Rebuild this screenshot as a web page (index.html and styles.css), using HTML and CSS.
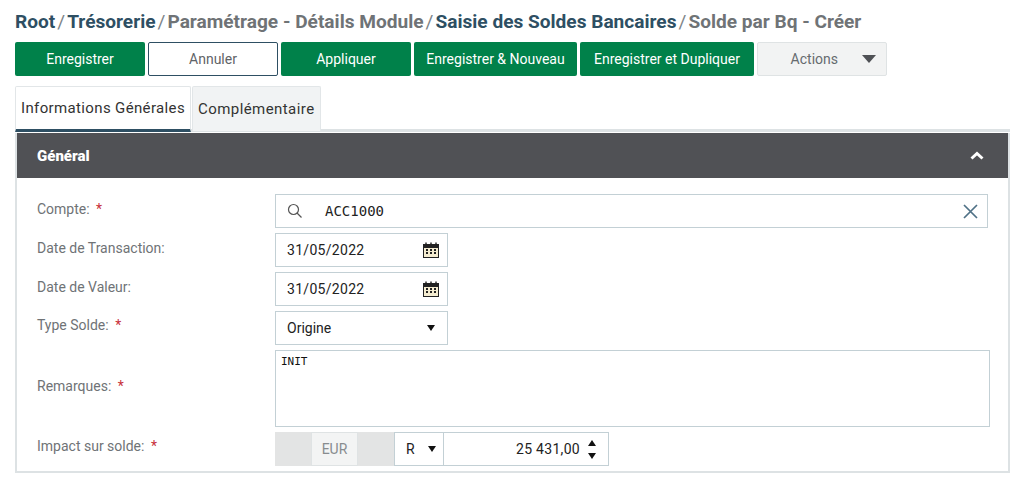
FILE: index.html
```html
<!DOCTYPE html>
<html lang="fr">
<head>
  <meta charset="UTF-8" />
  <title>Solde par Bq - Créer</title>
  <link rel="stylesheet" href="styles.css">
</head>
<body>
  <div class="breadcrumb">
    <a class="crumb-link">Root</a><span class="sep">/</span><a class="crumb-link">Trésorerie</a><span class="sep">/</span><span class="crumb">Paramétrage - Détails Module</span><span class="sep">/</span><a class="crumb-link">Saisie des Soldes Bancaires</a><span class="sep">/</span><span class="crumb">Solde par Bq - Créer</span>
  </div>

  <div class="toolbar">
    <button class="btn btn-green">Enregistrer</button>
    <button class="btn btn-outline">Annuler</button>
    <button class="btn btn-green">Appliquer</button>
    <button class="btn btn-green btn-new">Enregistrer &amp; Nouveau</button>
    <button class="btn btn-green btn-dup">Enregistrer et Dupliquer</button>
    <button class="btn btn-actions">Actions<span class="actions-caret"></span></button>
  </div>

  <div class="tabs">
    <div class="tab active">Informations Générales</div>
    <div class="tab">Complémentaire</div>
  </div>

  <div class="panel">
    <div class="panel-head">
      <span>Général</span>
      <svg width="14" height="9" viewBox="0 0 14 9"><path d="M1.5 7.5 L7 2.5 L12.5 7.5" fill="none" stroke="#fff" stroke-width="3"/></svg>
    </div>
    <div class="form">
      <div class="row">
        <label class="lbl">Compte: <span class="req">*</span></label>
        <div class="field field-search">
          <svg class="search-icon" width="16" height="16" viewBox="0 0 16 16"><circle cx="6.5" cy="6.5" r="5" fill="none" stroke="#555" stroke-width="1.2"/><path d="M10 10 L14.5 14.5" stroke="#555" stroke-width="1.2"/></svg>
          <span class="search-value">ACC1000</span>
          <svg class="clear-icon" width="15" height="15" viewBox="0 0 15 15"><path d="M1 1 L14 14 M14 1 L1 14" stroke="#4f7186" stroke-width="1.7"/></svg>
        </div>
      </div>
      <div class="row">
        <label class="lbl">Date de Transaction:</label>
        <div class="field field-short">
          <span class="date-value">31/05/2022</span>
          <svg width="16" height="16" viewBox="0 0 16 16"><use href="#cal"/></svg>
        </div>
      </div>
      <div class="row">
        <label class="lbl">Date de Valeur:</label>
        <div class="field field-short">
          <span class="date-value">31/05/2022</span>
          <svg width="16" height="16" viewBox="0 0 16 16"><use href="#cal"/></svg>
        </div>
      </div>
      <div class="row">
        <label class="lbl lbl-up">Type Solde: <span class="req">*</span></label>
        <div class="field field-short">
          <span>Origine</span>
          <span class="mini-caret"></span>
        </div>
      </div>
      <div class="row row-text">
        <label class="lbl">Remarques: <span class="req">*</span></label>
        <div class="textarea">INIT</div>
      </div>
      <div class="row">
        <label class="lbl lbl-up">Impact sur solde: <span class="req">*</span></label>
        <div class="impact">
          <div class="impact-grey"></div>
          <div class="impact-cur">EUR</div>
          <div class="impact-grey"></div>
          <div class="impact-sel"><span>R</span><span class="mini-caret"></span></div>
          <div class="impact-num">
            <span class="num-value">25 431,00</span>
            <span class="spin"><i class="spin-up"></i><i class="spin-down"></i></span>
          </div>
        </div>
      </div>
    </div>
  </div>

  <svg class="defs" width="0" height="0">
    <defs>
      <g id="cal">
        <rect x="0.5" y="2.5" width="15" height="13" fill="#f4ecd0" stroke="#222"/>
        <rect x="0" y="2" width="16" height="4" fill="#222"/>
        <path d="M3 0.5 V3 M8 0.5 V3 M13 0.5 V3" stroke="#222" stroke-width="1.4"/>
        <path d="M3 8 h2 M7 8 h2 M11 8 h2 M3 11 h2 M7 11 h2 M11 11 h2" stroke="#222" stroke-width="2"/>
      </g>
    </defs>
  </svg>
</body>
</html>
```

FILE: styles.css
```css
body {
  margin: 0;
  padding: 0 15px;
  background-color: #fff;
  font-family: Roboto, 'Liberation Sans', sans-serif;
  font-size: 14px;
  color: #333;
  overflow: hidden;
}

.breadcrumb {
  height: 42px;
  line-height: 44px;
  font-size: 19.1px;
  font-weight: 700;
  white-space: nowrap;
}

.crumb-link {
  color: #2e4f63;
}

.crumb {
  color: #6f7376;
}

.sep {
  margin: 0 2px;
  color: #7d8488;
  font-weight: 400;
}

.toolbar {
  display: flex;
  gap: 3px;
}

.btn {
  width: 130px;
  height: 34px;
  padding: 0;
  border: 1px solid transparent;
  border-radius: 2px;
  font-family: inherit;
  font-size: 14px;
}

.btn-new {
  width: 163px;
}

.btn-dup {
  width: 174px;
}

.btn-green {
  background-color: #00814a;
  color: #fff;
}

.btn-outline {
  background-color: #fff;
  border-color: #2e4f63;
  color: #5f6468;
}

.btn-actions {
  display: flex;
  align-items: center;
  justify-content: flex-end;
  gap: 24px;
  padding-right: 10px;
  background-color: #f2f3f3;
  border-color: #dfe3e4;
  color: #666b6f;
}

.actions-caret {
  border-left: 7px solid transparent;
  border-right: 7px solid transparent;
  border-top: 8px solid #4f5155;
}

.tabs {
  display: flex;
  gap: 1px;
  height: 46px;
  margin-top: 10px;
  border-bottom: 3px solid #dde2e4;
  width: 995px;
  box-sizing: border-box;
}

.tab {
  display: flex;
  align-items: center;
  height: 45px;
  padding: 0 5px;
  background-color: #f1f3f4;
  border: 1px solid #e2e6e8;
  border-bottom: none;
  border-radius: 2px 2px 0 0;
  box-sizing: border-box;
  font-size: 15px;
  letter-spacing: 0.43px;
  color: #333;
}

.tab.active {
  background-color: #fff;
  border-bottom: 3px solid #2e4f63;
  height: 46px;
  letter-spacing: 0.36px;
}

.panel {
  width: 995px;
  margin-top: 1px;
  box-sizing: border-box;
  border-left: 2px solid #dde2e4;
  border-right: 2px solid #dde2e4;
  border-bottom: 2px solid #dde2e4;
  padding-bottom: 5px;
}

.panel-head {
  display: flex;
  justify-content: space-between;
  align-items: center;
  height: 45px;
  padding: 0 24px 0 20px;
  background-color: #505155;
  color: #fff;
  font-size: 15px;
  font-weight: 900;
}

.form {
  display: flex;
  flex-direction: column;
  gap: 5px;
  padding-top: 16px;
}

.row {
  display: flex;
}

.lbl {
  width: 258px;
  flex-shrink: 0;
  padding: 7px 0 0 20px;
  box-sizing: border-box;
  color: #6f7376;
  font-size: 14px;
}

.lbl-up {
  padding-top: 6px;
}

.row-text .lbl {
  align-self: center;
  padding-top: 0;
  margin-top: -6px;
}

.req {
  margin-left: 3px;
  color: #c8303a;
}

.field {
  display: flex;
  align-items: center;
  justify-content: space-between;
  height: 34px;
  padding: 0 8px 0 11px;
  border: 1px solid #c3d0d5;
  box-sizing: border-box;
  background-color: #fff;
  font-size: 14px;
  color: #222;
}

.field-short {
  width: 173px;
}

.field-search {
  width: 713px;
  justify-content: flex-start;
  padding-right: 9px;
}

.search-value {
  margin-left: 22px;
  flex: 1;
  font-family: 'DejaVu Sans Mono', monospace;
  font-size: 14px;
}

.date-value,
.num-value {
  letter-spacing: 0.3px;
}

.mini-caret {
  margin-right: 4px;
  border-left: 4px solid transparent;
  border-right: 4px solid transparent;
  border-top: 6px solid #111;
}

.textarea {
  width: 715px;
  height: 77px;
  padding: 4px 5px;
  border: 1px solid #c3d0d5;
  box-sizing: border-box;
  font-family: 'DejaVu Sans Mono', monospace;
  font-size: 11px;
  color: #111;
}

.impact {
  display: flex;
  height: 34px;
  background-color: #e3e4e4;
}

.impact-grey {
  width: 36px;
}

.impact-cur {
  display: flex;
  align-items: center;
  justify-content: center;
  width: 47px;
  background-color: #f3f4f4;
  border: 1px solid #dfe3e4;
  box-sizing: border-box;
  color: #888c8f;
}

.impact-sel {
  display: flex;
  align-items: center;
  justify-content: space-between;
  width: 50px;
  padding: 0 3px 0 11px;
  background-color: #fff;
  border: 1px solid #c3d0d5;
  box-sizing: border-box;
  color: #222;
}

.impact-num {
  display: flex;
  align-items: center;
  justify-content: flex-end;
  gap: 8px;
  width: 165px;
  padding-right: 12px;
  background-color: #fff;
  border: 1px solid #c3d0d5;
  border-left: none;
  box-sizing: border-box;
  color: #222;
}

.spin {
  display: flex;
  flex-direction: column;
  gap: 7px;
}

.spin-up {
  border-left: 4px solid transparent;
  border-right: 4px solid transparent;
  border-bottom: 6px solid #111;
}

.spin-down {
  border-left: 4px solid transparent;
  border-right: 4px solid transparent;
  border-top: 6px solid #111;
}

.defs {
  display: block;
}
```
